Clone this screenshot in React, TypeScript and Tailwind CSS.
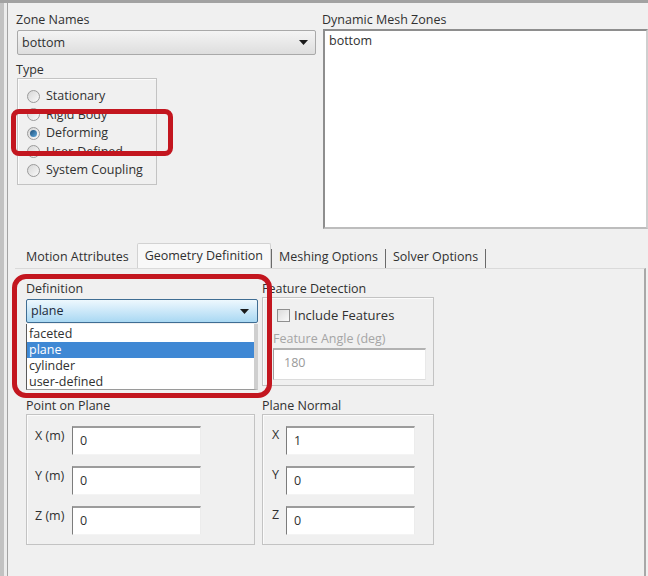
import { ReactNode } from 'react';

function Radio({ label, checked }: { label: string; checked?: boolean }) {
  return (
    <div className="flex items-center h-[18.5px]">
      <span className="w-[13px] h-[13px] rounded-full border border-[#9a9a9a] bg-gradient-to-br from-[#d6d6d6] to-[#fafafa] flex items-center justify-center">
        {checked && <span className="w-[7px] h-[7px] rounded-full bg-gradient-to-br from-[#1b4f7a] to-[#5fa8dc]" />}
      </span>
      <span className="ml-[6px]">{label}</span>
    </div>
  );
}

function TextBox({ value, className = '' }: { value: string; className?: string }) {
  return (
    <div
      className={`h-[29px] bg-white border-t-2 border-t-[#9c9c9c] border-l border-l-[#7c7c7c] border-r border-r-[#ececec] border-b border-b-[#f4f4f4] flex items-center pl-[7px] ${className}`}
    >
      {value}
    </div>
  );
}

function Group({ children, className = '' }: { children: ReactNode; className?: string }) {
  return <div className={`border border-[#c3c3c3] shadow-[inset_1px_1px_0_#fbfbfb] ${className}`}>{children}</div>;
}

function Arrow() {
  return (
    <svg width="9" height="5" viewBox="0 0 9 5">
      <path d="M0 0 H9 L4.5 5 Z" fill="#1a1a1a" />
    </svg>
  );
}

export default function App() {
  return (
    <div className="w-[648px] h-[576px] bg-[#f0f0f0] border-t-[3px] border-t-[#a2a2a2] flex overflow-hidden relative font-['Open_Sans','Noto_Sans',sans-serif] text-[12.5px] leading-[16px] text-[#303030]">
      {/* left window frame */}
      <div className="w-[4px] bg-[#c2c2c2]" />
      <div className="w-[3px] bg-[#ececec]" />
      <div className="w-[1px] bg-[#a3a3a3]" />

      <div className="flex-1 flex flex-col">
        {/* top section */}
        <div className="flex pt-[9px] pl-[8px]">
          <div className="w-[300px] flex flex-col">
            <div>Zone Names</div>
            <div className="mt-[2px] ml-[1px] h-[25px] rounded-[2px] border border-[#a9a9a9] bg-gradient-to-b from-[#f4f4f4] to-[#dedede] flex items-center justify-between pl-[4px] pr-[7px]">
              <span>bottom</span>
              <Arrow />
            </div>
            <div className="mt-[7px]">Type</div>
            <Group className="ml-[1px] w-[140px] h-[107px] pt-[8px] pl-[9px]">
              <Radio label="Stationary" />
              <Radio label="Rigid Body" />
              <Radio label="Deforming" checked />
              <Radio label="User-Defined" />
              <Radio label="System Coupling" />
            </Group>
          </div>
          <div className="ml-[6px] flex-1 flex flex-col">
            <div>Dynamic Mesh Zones</div>
            <div className="ml-[1px] mt-[1px] h-[200px] bg-white border-2 border-t-[#8e8e8e] border-l-[#8e8e8e] border-r-[#cfcfcf] border-b-[#bdbdbd] pl-[4px] pt-[2px]">
              bottom
            </div>
          </div>
        </div>

        {/* tabs */}
        <div className="mt-[14px] ml-[10px] flex items-end h-[25px]">
          <div className="px-[8px] pb-[3px]">Motion Attributes</div>
          <div className="h-[25px] px-[7px] flex items-center border border-b-0 border-[#d2d2d2] bg-[#f8f8f8] rounded-t-[2px]">
            Geometry Definition
          </div>
          <div className="px-[7px] pb-[3px] border-l border-[#6a6a6a]">Meshing Options</div>
          <div className="px-[7px] pb-[3px] border-l border-r border-[#6a6a6a]">Solver Options</div>
        </div>

        {/* tab panel */}
        <div className="ml-[7px] mr-[2px] flex-1 border-t border-t-[#dadada] border-r-2 border-r-[#a8a8a8] pt-[12px] pl-[11px]">
          <div className="flex">
            <div className="w-[232px] relative">
              <div>Definition</div>
              <div className="mt-[2px] h-[24px] border border-[#3f6d93] rounded-[2px] bg-gradient-to-b from-[#eef8fe] to-[#a9d8f3] flex items-center justify-between pl-[4px] pr-[8px] text-[#1c2a3a]">
                <span>plane</span>
                <Arrow />
              </div>
              <div className="absolute left-0 top-[43px] w-[232px] h-[66px] bg-white border-l border-l-[#5a5a5a] border-b border-b-[#9a9a9a] border-r-[4px] border-r-[#cfcfcf] pt-[2px]">
                <div className="h-[16px] pl-[2px]">faceted</div>
                <div className="h-[16px] pl-[2px] bg-[#3f88d4] text-white">plane</div>
                <div className="h-[16px] pl-[2px]">cylinder</div>
                <div className="h-[16px] pl-[2px]">user-defined</div>
              </div>
            </div>
            <div className="ml-[4px] flex flex-col">
              <div>Feature Detection</div>
              <Group className="w-[172px] h-[89px] pl-[10px] pt-[9px]">
                <div className="flex items-center">
                  <span className="ml-[4px] w-[13px] h-[13px] border border-[#8f8f8f] bg-gradient-to-br from-[#dcdcdc] to-[#fafafa]" />
                  <span className="ml-[4px] text-[13px]">Include Features</span>
                </div>
                <div className="mt-[8px] text-[#a5a5a5]">Feature Angle (deg)</div>
                <div className="mt-[1px] w-[153px] h-[32px] bg-white border-t-2 border-t-[#b2b2b2] border-l border-l-[#a0a0a0] border-r border-r-[#e9e9e9] border-b border-b-[#dcdcdc] pl-[10px] pt-[5px] text-[#9a9a9a]">
                  180
                </div>
              </Group>
            </div>
          </div>

          <div className="flex mt-[12px]">
            <div className="w-[232px] flex flex-col">
              <div>Point on Plane</div>
              <Group className="w-[229px] h-[131px] pt-[11px] pl-[8px] flex flex-col gap-[11px]">
                {['X (m)', 'Y (m)', 'Z (m)'].map((l) => (
                  <div key={l} className="flex">
                    <span className="w-[37px] pt-[2px]">{l}</span>
                    <TextBox value="0" className="w-[129px]" />
                  </div>
                ))}
              </Group>
            </div>
            <div className="ml-[4px] flex flex-col">
              <div>Plane Normal</div>
              <Group className="w-[172px] h-[131px] pt-[11px] pl-[9px] flex flex-col gap-[11px]">
                {[
                  ['X', '1'],
                  ['Y', '0'],
                  ['Z', '0'],
                ].map(([l, v]) => (
                  <div key={l} className="flex">
                    <span className="w-[14px] pt-[1px]">{l}</span>
                    <TextBox value={v} className="w-[129px]" />
                  </div>
                ))}
              </Group>
            </div>
          </div>
        </div>
      </div>

      {/* red annotation frames */}
      <div className="absolute left-[11px] top-[106px] w-[162px] h-[47px] border-[5px] border-[#c3161f] rounded-[8px]" />
      <div className="absolute left-[12px] top-[271px] w-[260px] h-[124px] border-[5px] border-[#c3161f] rounded-[14px]" />
    </div>
  );
}
